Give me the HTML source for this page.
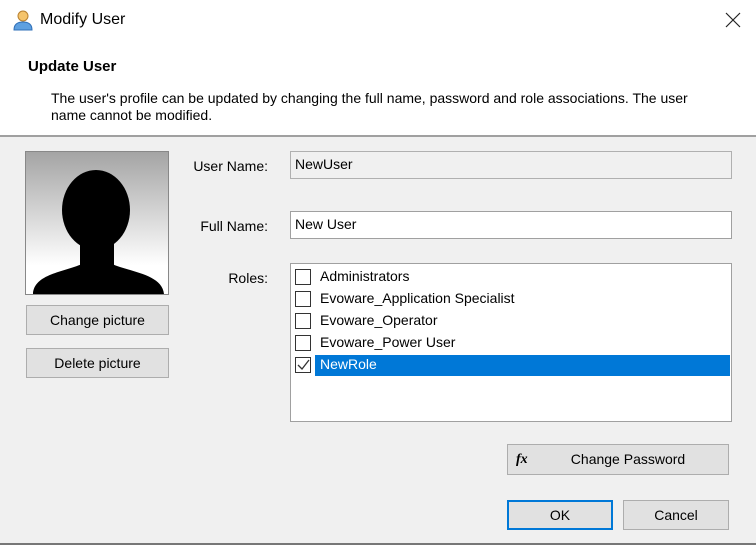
<!DOCTYPE html>
<html><head><style>
body{margin:0;width:756px;height:545px;background:#f0f0f0;font-family:"Liberation Sans",sans-serif;font-size:14px;color:#000;position:relative;overflow:hidden}
.a{position:absolute}
.btn{position:absolute;background:#e1e1e1;border:1px solid #adadad;box-sizing:border-box;text-align:center;font-size:14px}
.lbl{position:absolute;width:120px;text-align:right;left:148px}
.tb{position:absolute;left:290px;width:442px;height:28px;border:1px solid #a0a0a0;box-sizing:border-box;padding:4px 4px;font-size:14px}
.cb{position:absolute;left:4px;width:16px;height:16px;border:1px solid #333;box-sizing:border-box;background:#fff}
.it{position:absolute;left:29px;font-size:14px}
</style></head><body>
<div class="a" style="left:0;top:0;width:756px;height:136px;background:#fff"></div>
<div class="a" style="left:0;top:135px;width:756px;height:2px;background:#a0a0a0"></div>
<svg class="a" style="left:12px;top:9px" width="22" height="22" viewBox="0 0 22 22"><path d="M2 21 C2 15 6 13 11 13 C16 13 20 15 20 21 Z" fill="#5ea0e0" stroke="#3070b8"/><circle cx="11" cy="7" r="5" fill="#f5c46c" stroke="#b88030"/></svg>
<div class="a" style="left:40px;top:11px;font-size:16px">Modify User</div>
<svg class="a" style="left:725px;top:12px" width="16" height="16"><path d="M1 1 L15 15 M15 1 L1 15" stroke="#222" stroke-width="1.2"/></svg>
<div class="a" style="left:28px;top:58px;font-size:15px;font-weight:bold">Update User</div>
<div class="a" style="left:51px;top:90px;font-size:14px;line-height:17px;width:660px">The user's profile can be updated by changing the full name, password and role associations. The user name cannot be modified.</div>

<div class="a" style="left:25px;top:151px;width:144px;height:144px;box-sizing:border-box;border:1px solid #888;background:linear-gradient(#a4a4a4,#fff 80%);overflow:hidden">
<svg width="142" height="142" viewBox="0 0 142 142"><ellipse cx="70" cy="58" rx="34" ry="40" fill="#000"/><rect x="54" y="80" width="34" height="40" fill="#000"/><path d="M7 142 C8 122 38 120 56 112 L86 112 C104 120 136 122 138 142 Z" fill="#000"/></svg></div>
<div class="btn" style="left:26px;top:305px;width:143px;height:30px;line-height:28px">Change picture</div>
<div class="btn" style="left:26px;top:348px;width:143px;height:30px;line-height:28px">Delete picture</div>

<div class="lbl" style="top:158px">User Name:</div>
<div class="tb" style="top:151px;background:#f0f0f0;border-color:#b0b0b0">NewUser</div>
<div class="lbl" style="top:218px">Full Name:</div>
<div class="tb" style="top:211px;background:#fff">New User</div>
<div class="lbl" style="top:270px">Roles:</div>
<div class="a" style="left:290px;top:263px;width:442px;height:159px;border:1px solid #a0a0a0;box-sizing:border-box;background:#fff">
<div class="cb" style="top:5px"></div><div class="it" style="top:4px">Administrators</div>
<div class="cb" style="top:27px"></div><div class="it" style="top:26px">Evoware_Application Specialist</div>
<div class="cb" style="top:49px"></div><div class="it" style="top:48px">Evoware_Operator</div>
<div class="cb" style="top:71px"></div><div class="it" style="top:70px">Evoware_Power User</div>
<div class="cb" style="top:93px"><svg width="14" height="14" style="position:absolute;left:0;top:0"><path d="M2 7 L6 11 L13 2" fill="none" stroke="#333" stroke-width="1.3"/></svg></div>
<div class="a" style="left:24px;top:91px;width:415px;height:21px;background:#0078d7"></div>
<div class="it" style="top:92px;color:#fff">NewRole</div>
</div>
<div class="btn" style="left:507px;top:444px;width:222px;height:31px;line-height:29px"><span style="position:absolute;left:8px;font-family:'Liberation Serif',serif;font-style:italic;font-weight:bold">fx</span><span style="margin-left:20px">Change Password</span></div>
<div class="btn" style="left:507px;top:500px;width:106px;height:30px;line-height:26px;border:2px solid #0078d7">OK</div>
<div class="btn" style="left:623px;top:500px;width:106px;height:30px;line-height:28px">Cancel</div>
<div class="a" style="left:0;top:543px;width:756px;height:2px;background:#777"></div>
</body></html>
